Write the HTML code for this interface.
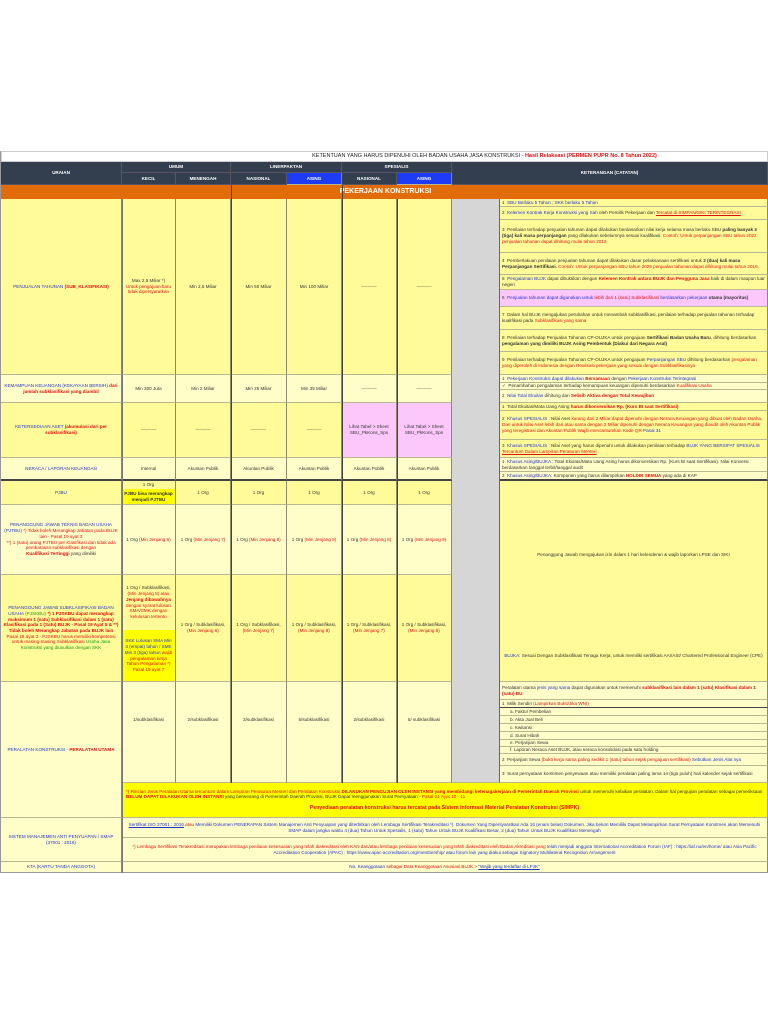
<!DOCTYPE html>
<html><head><meta charset="utf-8"><style>
*{margin:0;padding:0;box-sizing:border-box}
body{width:768px;height:1024px;background:#fff;position:relative;overflow:hidden;font-family:"Liberation Sans",sans-serif;font-size:4.6px;line-height:1.25;color:#333}
.a{position:absolute;display:flex;align-items:center;justify-content:center;text-align:center;border-right:1px solid #8a8a70;border-bottom:1px solid #b8b890;overflow:hidden;padding:0 2px}
.a>div{width:100%}
.l{justify-content:flex-start;text-align:left}
.y{background:#fffb98}.w{background:#fffdc8}.p{background:#fcc8fc}.b{background:#ffff00}.g{background:#d6d6d6}
.h{background:#333f4f;color:#fff;font-weight:bold;border-color:#556}
.bl{background:#1f3cf5;color:#fff;font-weight:bold}
.u{color:#2233cc}.r{color:#e01010}.rb{color:#e01010;font-weight:bold}.k{font-weight:bold}.gr{color:#1a9a1a}
</style></head><body>
<div class="a" style="left:1px;top:151px;width:767px;height:11px;background:#fff;border:1px solid #ccc;font-size:5.5px;color:#222"><div style="padding-left:200px">KETENTUAN YANG HARUS DIPENUHI OLEH BADAN USAHA JASA KONSTRUKSI - <span class="rb">Hasil Relaksasi (PERMEN PUPR No. 8 Tahun 2022)</span></div></div>
<div class="a h" style="left:1px;top:162px;width:121px;height:23px"><div>URAIAN</div></div>
<div class="a h" style="left:122px;top:162px;width:109px;height:11px"><div>UMUM</div></div>
<div class="a h" style="left:231px;top:162px;width:111px;height:11px"><div>LINERPAKTAN</div></div>
<div class="a h" style="left:342px;top:162px;width:110px;height:11px"><div>SPESIALIS</div></div>
<div class="a h" style="left:452px;top:162px;width:316px;height:23px"><div>KETERANGAN (CATATAN)</div></div>
<div class="a h" style="left:122px;top:173px;width:54px;height:12px"><div>KECIL</div></div>
<div class="a h" style="left:176px;top:173px;width:55px;height:12px"><div>MENENGAH</div></div>
<div class="a h" style="left:231px;top:173px;width:56px;height:12px"><div>NASIONAL</div></div>
<div class="a bl" style="left:287px;top:173px;width:55px;height:12px"><div>ASING</div></div>
<div class="a h" style="left:342px;top:173px;width:55px;height:12px"><div>NASIONAL</div></div>
<div class="a bl" style="left:397px;top:173px;width:55px;height:12px"><div>ASING</div></div>
<div class="a" style="left:0;top:185px;width:768px;height:14px;background:#e36c0a;color:#fff;font-weight:bold;font-size:7px;border:none"><div style="padding-left:3px">PEKERJAAN KONSTRUKSI</div></div>
<div class="a g" style="left:452px;top:199px;width:48px;height:584px;border-right:1px solid #666"></div>

<div class="a y" style="left:1px;top:199px;width:121px;height:176px"><div><span class="u">PENJUALAN TAHUNAN </span><span class="rb">(SUB_KLASIFIKASI)</span></div></div>
<div class="a y" style="left:122px;top:199px;width:54px;height:176px"><div>Max 2,5 Miliar *)<br><span class="r">Untuk pengajuan baru tidak dipersyaratkan</span></div></div>
<div class="a y" style="left:176px;top:199px;width:55px;height:176px"><div>Min 2,5 Miliar</div></div>
<div class="a y" style="left:231px;top:199px;width:56px;height:176px"><div>Min 50 Miliar</div></div>
<div class="a y" style="left:287px;top:199px;width:55px;height:176px"><div>Min 100 Miliar</div></div>
<div class="a y" style="left:342px;top:199px;width:55px;height:176px"><div>----------</div></div>
<div class="a y" style="left:397px;top:199px;width:55px;height:176px"><div>----------</div></div>
<div class="a y l" style="left:500px;top:199px;width:268px;height:8px"><div>1 &nbsp;<span class="u">SBU Berlaku 5 Tahun ; SKK berlaku 5 Tahun</span></div></div>
<div class="a y l" style="left:500px;top:207px;width:268px;height:13px"><div>2 &nbsp;<span class="u">Kelemen Kontrak Kerja Konstruksi yang Sah</span> oleh Pemilik Pekerjaan dan <span class="r" style="text-decoration:underline">Tercatat di SIMPAN/SIKI TERINTEGRASI</span></div></div>
<div class="a y l" style="left:500px;top:220px;width:268px;height:33px"><div>3 &nbsp;Penilaian terhadap penjualan tahunan dapat dilakukan berdasarkan nilai kerja selama masa berlaku SBU <b>paling banyak 3 (tiga) kali masa perpanjangan</b> yang dilakukan sebelumnya sesuai kualifikasi. <span class="r">Contoh: Untuk perpanjangan SBU tahun 2022 penjualan tahunan dapat dihitung mulai tahun 2013</span></div></div>
<div class="a y l" style="left:500px;top:253px;width:268px;height:22px"><div>4 &nbsp;Pemberlakuan penilaian penjualan tahunan dapat dilakukan dasar pelaksanaan sertifikasi untuk <b>2 (dua) kali masa Perpanjangan Sertifikasi.</b> <span class="r">Contoh: Untuk perpanjangan SBU tahun 2025 penjualan tahunan dapat dihitung mulai tahun 2016.</span></div></div>
<div class="a y l" style="left:500px;top:275px;width:268px;height:15px"><div>5 &nbsp;<span class="u">Pengalaman BUJK</span> dapat dibuktikan dengan <span class="rb">Kelemen Kontrak antara BUJK dan Pengguna Jasa</span> baik di dalam maupun luar negeri</div></div>
<div class="a p l" style="left:500px;top:290px;width:268px;height:17px"><div>6 &nbsp;<span class="u">Penjualan tahunan dapat digunakan untuk</span> <span class="r">lebih dari 1 (satu) Subklasifikasi</span> <span class="u">berdasarkan pekerjaan</span> <b>utama (mayoritas)</b></div></div>
<div class="a y l" style="left:500px;top:307px;width:268px;height:23px"><div>7 &nbsp;Dalam hal BUJK mengajukan perubahan untuk menambah subklasifikasi, penilaian terhadap penjualan tahunan terhadap kualifikasi pada <span class="r">Subklasifikasi yang sama</span></div></div>
<div class="a y l" style="left:500px;top:330px;width:268px;height:22px"><div>8 &nbsp;Penilaian terhadap Penjualan Tahunan CP-OUJKA untuk pengajuan <b>Sertifikasi Badan Usaha Baru</b>, dihitung berdasarkan <b>pengalaman yang dimiliki BUJK Asing Pembentuk (Diakui dari Negara Asal)</b></div></div>
<div class="a y l" style="left:500px;top:352px;width:268px;height:23px"><div>9 &nbsp;Penilaian terhadap Penjualan Tahunan CP-OUJKA untuk pengajuan <span class="u">Perpanjangan SBU</span> dihitung berdasarkan <span class="r">pengalaman yang diperoleh di Indonesia dengan Realisasi pekerjaan yang sesuai dengan Subklasifikasinya</span></div></div>

<div class="a w" style="left:1px;top:375px;width:121px;height:28px"><div><span class="u">KEMAMPUAN KEUANGAN (KEKAYAAN BERSIH)</span> <span class="rb">dari jumlah subklasifikasi yang diambil</span></div></div>
<div class="a w" style="left:122px;top:375px;width:54px;height:28px"><div>Min 300 Juta</div></div>
<div class="a w" style="left:176px;top:375px;width:55px;height:28px"><div>Min 2 Miliar</div></div>
<div class="a w" style="left:231px;top:375px;width:56px;height:28px"><div>Min 25 Miliar</div></div>
<div class="a w" style="left:287px;top:375px;width:55px;height:28px"><div>Min 35 Miliar</div></div>
<div class="a w" style="left:342px;top:375px;width:55px;height:28px"><div>----------</div></div>
<div class="a w" style="left:397px;top:375px;width:55px;height:28px"><div>----------</div></div>
<div class="a w l" style="left:500px;top:375px;width:268px;height:8px"><div>1 &nbsp;<span class="u">Pekerjaan Konstruksi dapat dilakukan</span> <span class="rb">Bersamaan</span> dengan <span class="u">Pekerjaan Konstruksi Terintegrasi</span></div></div>
<div class="a w l" style="left:500px;top:383px;width:268px;height:7px"><div>✓ &nbsp;Penambahan pengalaman terhadap kemampuan keuangan dipenuhi berdasarkan <span class="r">Kualifikasi Usaha</span></div></div>
<div class="a w l" style="left:500px;top:390px;width:268px;height:13px"><div>2 &nbsp;<span class="u">Nilai Total Ekuitas</span> dihitung dari <span class="rb">Selisih Aktiva dengan Total Kewajiban</span></div></div>

<div class="a y" style="left:1px;top:403px;width:121px;height:55px"><div><span class="u">KETERSEDIAAN ASET</span> <span class="rb">(akumulasi dari per subklasifikasi)</span></div></div>
<div class="a y" style="left:122px;top:403px;width:54px;height:55px"><div>----------</div></div>
<div class="a y" style="left:176px;top:403px;width:55px;height:55px"><div>----------</div></div>
<div class="a y" style="left:231px;top:403px;width:56px;height:55px"><div>----------</div></div>
<div class="a y" style="left:287px;top:403px;width:55px;height:55px"><div>----------</div></div>
<div class="a p" style="left:342px;top:403px;width:55px;height:55px"><div>Lihat Tabel > Sheet SBU_PkKons_Sps</div></div>
<div class="a p" style="left:397px;top:403px;width:55px;height:55px"><div>Lihat Tabel > Sheet SBU_PkKons_Sps</div></div>
<div class="a y l" style="left:500px;top:403px;width:268px;height:8px"><div>1 &nbsp;Total Ekuitas/Mata Uang Asing <span class="rb">harus dikonversikan Rp. (Kurs BI saat Sertifikasi)</span></div></div>
<div class="a y l" style="left:500px;top:411px;width:268px;height:29px"><div>2 &nbsp;<span class="u">Khusus SPESIALIS</span> : Nilai Aset <span class="r">kurang dari 2 Miliar dapat dipenuhi dengan Neraca Keuangan yang dibuat oleh Badan Usaha, Dan untuk Nilai Aset lebih dari atau sama dengan 2 Miliar dipenuhi dengan Neraca Keuangan yang diaudit oleh Akuntan Publik yang teregistrasi dan Akuntan Publik Wajib mencantumkan Kode QR</span> <span class="u">Pasal 31</span></div></div>
<div class="a y l" style="left:500px;top:440px;width:268px;height:18px"><div>3 &nbsp;<span class="u">Khusus SPESIALIS</span> : Nilai Aset yang harus dipenuhi untuk dilakukan penilaian terhadap <span class="u">BUJK YANG BERSIFAT SPESIALIS</span> <span class="r" style="text-decoration:underline">Tercantum Dalam Lampiran Peraturan Menteri</span></div></div>

<div class="a w" style="left:1px;top:458px;width:121px;height:23px;border-bottom:2px solid #444"><div class="u">NERACA / LAPORAN KEUANGAN</div></div>
<div class="a w" style="left:122px;top:458px;width:54px;height:23px;border-bottom:2px solid #444"><div>Internal</div></div>
<div class="a w" style="left:176px;top:458px;width:55px;height:23px;border-bottom:2px solid #444"><div>Akuntan Publik</div></div>
<div class="a w" style="left:231px;top:458px;width:56px;height:23px;border-bottom:2px solid #444"><div>Akuntan Publik</div></div>
<div class="a w" style="left:287px;top:458px;width:55px;height:23px;border-bottom:2px solid #444"><div>Akuntan Publik</div></div>
<div class="a w" style="left:342px;top:458px;width:55px;height:23px;border-bottom:2px solid #444"><div>Akuntan Publik</div></div>
<div class="a w" style="left:397px;top:458px;width:55px;height:23px;border-bottom:2px solid #444"><div>Akuntan Publik</div></div>
<div class="a w l" style="left:500px;top:458px;width:268px;height:14px"><div>1 &nbsp;<span class="u">Khusus Asing/BUJKA</span> : Total Ekuitas/Mata Uang Asing harus dikonversikan Rp. (Kurs BI saat Sertifikasi). Nilai Konversi berdasarkan tanggal terbit/tanggal audit</div></div>
<div class="a w l" style="left:500px;top:472px;width:268px;height:9px;border-bottom:2px solid #444"><div>2 &nbsp;<span class="u">Khusus Asing/BUJKA</span>: Komponen yang harus dilampirkan <span class="rb">HOLDIR SEMUA</span> yang ada di KAP</div></div>

<div class="a y" style="left:1px;top:481px;width:121px;height:24px"><div class="u">PJBU</div></div>
<div class="a y" style="left:122px;top:481px;width:54px;height:8px;border-bottom:none"><div>1 Org</div></div>
<div class="a b" style="left:122px;top:489px;width:54px;height:16px"><div class="k">PJBU bisa merangkap menjadi PJTBU</div></div>
<div class="a y" style="left:176px;top:481px;width:55px;height:24px"><div>1 Org</div></div>
<div class="a y" style="left:231px;top:481px;width:56px;height:24px"><div>1 Org</div></div>
<div class="a y" style="left:287px;top:481px;width:55px;height:24px"><div>1 Org</div></div>
<div class="a y" style="left:342px;top:481px;width:55px;height:24px"><div>1 Org</div></div>
<div class="a y" style="left:397px;top:481px;width:55px;height:24px"><div>1 Org</div></div>
<div class="a y" style="left:500px;top:481px;width:268px;height:201px;align-items:flex-start"><div>
<div style="margin-top:71px">Penanggung Jawab mengajukan izin dalam 1 hari kelenderan &amp; wajib laporkan LPSE dan SIKI</div>
<div style="margin-top:95px"><span class="u">BUJKA</span>: Sesuai Dengan Subklasifikasi Tenaga Kerja; untuk memiliki sertifikasi AAI/ASI/ Chartered Professional Engineer (CPE)</div></div></div>

<div class="a w" style="left:1px;top:505px;width:121px;height:70px"><div><span class="u">PENANGGUNG JAWAB TEKNIS BADAN USAHA</span><br><span class="u">(PJTBU)</span> <span class="r">*) Tidak boleh Merangkap Jabatan pada BUJK lain - Pasal 19 ayat 3<br>**) 1 (satu) orang PJTBU per Klasifikasi dan tidak ada pembatasan subklasifikasi dengan</span><br><span class="rb">Kualifikasi Tertinggi</span> yang dimiliki</div></div>
<div class="a w" style="left:122px;top:505px;width:54px;height:70px"><div>1 Org <span class="r">(Min Jenjang 6)</span></div></div>
<div class="a w" style="left:176px;top:505px;width:55px;height:70px"><div>1 Org <span class="r">(Min Jenjang 7)</span></div></div>
<div class="a w" style="left:231px;top:505px;width:56px;height:70px"><div>1 Org <span class="r">(Min Jenjang 8)</span></div></div>
<div class="a w" style="left:287px;top:505px;width:55px;height:70px"><div>1 Org <span class="r">(Min Jenjang 9)</span></div></div>
<div class="a w" style="left:342px;top:505px;width:55px;height:70px"><div>1 Org <span class="r">(Min Jenjang 8)</span></div></div>
<div class="a w" style="left:397px;top:505px;width:55px;height:70px"><div>1 Org <span class="r">(Min Jenjang 9)</span></div></div>

<div class="a y" style="left:1px;top:575px;width:121px;height:107px"><div><span class="u">PENANGGUNG JAWAB SUBKLASIFIKASI BADAN USAHA</span> <span class="gr">(PJSKBU)</span> <span class="rb">*) 1 PJSKBU dapat merangkap maksimum 1 (satu) Subklasifikasi dalam 1 (satu) Klasifikasi pada 1 (Satu) BUJK - Pasal 19 Ayat 5 &amp; **) Tidak boleh Merangkap Jabatan pada BUJK lain</span> <span class="r">Pasal 19 ayat 3 - PJSKBU harus memiliki kompetensi untuk masing-masing Subklasifikasi</span> <span class="gr">Usaha Jasa Konstruksi yang diusulkan dengan SKK</span></div></div>
<div class="a y" style="left:122px;top:575px;width:54px;height:55px;border-bottom:none"><div>1 Org / Subklasifikasi,<br><span class="r">(Min Jenjang 5) atau <b>Jenjang dibawahnya</b> dengan syarat lulusan SMA/SMK dengan kelulusan tertentu</span></div></div>
<div class="a b" style="left:122px;top:630px;width:54px;height:52px"><div><span class="u">SKK Lulusan SMA Min 4 (empat) tahun / SMK Min 3 (tiga) tahun</span> <span class="r">wajib pengalaman kerja Tahun Pengalaman *) Pasal 19 ayat 7</span></div></div>
<div class="a y" style="left:176px;top:575px;width:55px;height:107px"><div>1 Org / Subklasifikasi,<br><span class="r">(Min Jenjang 6)</span></div></div>
<div class="a y" style="left:231px;top:575px;width:56px;height:107px"><div>1 Org / Subklasifikasi,<br><span class="r">(Min Jenjang 7)</span></div></div>
<div class="a y" style="left:287px;top:575px;width:55px;height:107px"><div>1 Org / Subklasifikasi,<br><span class="r">(Min Jenjang 8)</span></div></div>
<div class="a y" style="left:342px;top:575px;width:55px;height:107px"><div>1 Org / Subklasifikasi,<br><span class="r">(Min Jenjang 7)</span></div></div>
<div class="a y" style="left:397px;top:575px;width:55px;height:107px"><div>1 Org / Subklasifikasi,<br><span class="r">(Min Jenjang 8)</span></div></div>

<div class="a w" style="left:1px;top:682px;width:121px;height:136px"><div><span class="u">PERALATAN KONSTRUKSI - </span><span class="rb">PERALATAN UTAMA</span></div></div>
<div class="a w" style="left:122px;top:682px;width:54px;height:101px"><div style="margin-top:-24px">1/subklasifikasi</div></div>
<div class="a w" style="left:176px;top:682px;width:55px;height:101px"><div style="margin-top:-24px">2/subklasifikasi</div></div>
<div class="a w" style="left:231px;top:682px;width:56px;height:101px"><div style="margin-top:-24px">3/subklasifikasi</div></div>
<div class="a w" style="left:287px;top:682px;width:55px;height:101px"><div style="margin-top:-24px">5/subklasifikasi</div></div>
<div class="a w" style="left:342px;top:682px;width:55px;height:101px"><div style="margin-top:-24px">2/subklasifikasi</div></div>
<div class="a w" style="left:397px;top:682px;width:55px;height:101px"><div style="margin-top:-24px">5/ subklasifikasi</div></div>
<div class="a w l" style="left:500px;top:682px;width:268px;height:18px"><div>Peralatan utama <span class="u">jenis yang sama</span> dapat digunakan untuk memenuhi <span class="rb">subklasifikasi lain dalam 1 (satu) Klasifikasi dalam 1 (satu) BU</span></div></div>
<div class="a w l" style="left:500px;top:700px;width:268px;height:8px;border-bottom:1px solid #444"><div>1 &nbsp;Milik Sendiri <span class="r">(Lampirkan Bukti/Jika WNI)</span></div></div>
<div class="a w l" style="left:500px;top:708px;width:268px;height:8px;padding-left:10px"><div>a. Faktur Pembelian</div></div>
<div class="a w l" style="left:500px;top:716px;width:268px;height:8px;padding-left:10px"><div>b. Akta Jual Beli</div></div>
<div class="a w l" style="left:500px;top:724px;width:268px;height:8px;padding-left:10px"><div>c. Kwitansi</div></div>
<div class="a w l" style="left:500px;top:732px;width:268px;height:8px;padding-left:10px"><div>d. Surat Hibah</div></div>
<div class="a w l" style="left:500px;top:740px;width:268px;height:7px;padding-left:10px"><div>e. Perjanjian Sewa</div></div>
<div class="a w l" style="left:500px;top:747px;width:268px;height:7px;padding-left:10px"><div>f. Laporan Neraca Aset BUJK, atau neraca konsolidasi pada satu holding</div></div>
<div class="a w l" style="left:500px;top:754px;width:268px;height:12px"><div>2 &nbsp;Perjanjian Sewa <span class="r">(bukti kerja sama paling sedikit 1 (satu) tahun sejak pengajuan sertifikasi)</span> <span class="u">Sebutkan Jenis Alat nya</span></div></div>
<div class="a w l" style="left:500px;top:766px;width:268px;height:17px"><div>3 &nbsp;Surat pernyataan komitmen penyewaan atau memiliki peralatan paling lama 14 (tiga puluh) hari kalender sejak sertifikasi</div></div>
<div class="a b" style="left:122px;top:783px;width:646px;height:35px;padding:3px 4px"><div><div style="text-align:left"><span class="r">*) Rincian Jenis Peralatan Utama tercantum dalam Lampiran Peraturan Menteri dan Peralatan Konstruksi</span> <span class="rb">DILAKUKAN PENGUJIAN OLEH INSTANSI yang membidangi ketenagakerjaan di Pemerintah Daerah Provinsi</span> untuk memenuhi kelaikan peralatan. Dalam hal pengujian peralatan sebagai pemeriksaan <span class="rb">BELUM DAPAT DILAKUKAN OLEH INSTANSI</span> yang berwenang di Pemerintah Daerah Provinsi, BUJK Dapat menggunakan Surat Pernyataan - <span class="r">Pasal 21 Ayat 10 - 11</span></div><div class="rb" style="font-size:5.2px;margin-top:5px">Penyediaan peralatan konstruksi harus tercatat pada Sistem Informasi Material Peralatan Konstruksi (SIMPK)</div></div></div>

<div class="a w" style="left:1px;top:818px;width:121px;height:44px"><div class="u">SISTEM MANAJEMEN ANTI PENYUAPAN / SMAP (37001 : 2016)</div></div>
<div class="a w" style="left:122px;top:818px;width:646px;height:20px"><div><span class="u" style="text-decoration:underline">Sertifikat ISO 37001 : 2016</span> <span class="r">atau</span> <span class="u">Memiliki Dokumen PENERAPAN Sistem Manajemen Anti Penyuapan yang diterbitkan oleh Lembaga Sertifikasi Terakreditasi *). Dokumen Yang Dipersyaratkan Ada 16 (enam belas) Dokumen. Jika belum Memiliki Dapat Melampirkan Surat Pernyataan Komitmen akan Memenuhi SMAP dalam jangka waktu 4 (dua) Tahun Untuk Spesialis, 1 (satu) Tahun Untuk BUJK Kualifikasi Besar, 2 (dua) Tahun Untuk BUJK Kualifikasi Menengah</span></div></div>
<div class="a w" style="left:122px;top:838px;width:646px;height:24px"><div><span class="r">*) Lembaga Sertifikasi Terakreditasi merupakan lembaga penilaian kesesuaian yang telah diakreditasi oleh KAN dan/atau lembaga penilaian kesesuaian yang telah diakreditasi oleh Badan Akreditasi yang</span> <span class="u">telah menjadi anggota International Accreditation Forum (IAF) : https://iaf.nu/en/home/ atau Asia Pacific Accreditation Cooperation (APAC) : https://www.apac-accreditation.org/membership/ atau forum lain yang diakui sebagai Signatory Multilateral Recognition Arrangement</span></div></div>
<div class="a w" style="left:1px;top:862px;width:121px;height:11px;border-bottom:1px solid #999"><div class="u">KTA (KARTU TANDA ANGGOTA)</div></div>
<div class="a w" style="left:122px;top:862px;width:646px;height:11px;border-bottom:1px solid #999"><div><span class="u">No. Keanggotaan</span> <span class="r">sebagai Data Keanggotaan Asosiasi BUJK ></span> <span class="u" style="text-decoration:underline">"Wajib yang terdaftar di LPJK"</span></div></div>
<div style="position:absolute;left:231px;top:185px;width:1px;height:598px;background:#444"></div>
<div style="position:absolute;left:342px;top:185px;width:1px;height:598px;background:#444"></div>
<div style="position:absolute;left:397px;top:199px;width:1px;height:584px;background:#444"></div>
<div style="position:absolute;left:122px;top:199px;width:1px;height:674px;background:#777"></div>
<div style="position:absolute;left:0;top:151px;width:1px;height:722px;background:#999"></div>
</body></html>
